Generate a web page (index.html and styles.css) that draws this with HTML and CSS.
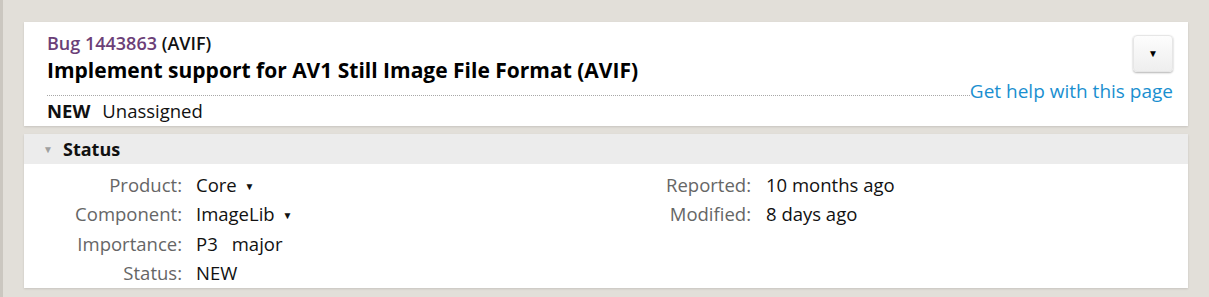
FILE: index.html
```html
<!DOCTYPE html>
<html lang="en">
<head>
<meta charset="utf-8">
<title>Bug 1443863</title>
<link rel="stylesheet" href="styles.css">
</head>
<body>
<div class="page">
  <section class="card summary">
    <div class="summary-head">
      <div class="titles">
        <div class="bug-line"><a class="bug-id" href="#">Bug 1443863</a> <span class="alias">(AVIF)</span></div>
        <h1 class="title">Implement support for AV1 Still Image File Format (AVIF)</h1>
      </div>
      <div class="actions">
        <button class="menu-btn" type="button"><span class="tri">&#9660;</span></button>
        <a class="help" href="#">Get help with this page</a>
      </div>
    </div>
    <div class="state-line"><span class="state">NEW</span><span class="assignee">Unassigned</span></div>
  </section>

  <section class="card module">
    <div class="module-head"><span class="twisty">&#9660;</span><span class="module-title">Status</span></div>
    <div class="module-body">
      <div class="fields fields-left">
        <div class="label">Product:</div><div class="value">Core <span class="drop">&#9660;</span></div>
        <div class="label">Component:</div><div class="value">ImageLib <span class="drop">&#9660;</span></div>
        <div class="label">Importance:</div><div class="value">P3<span class="sev">major</span></div>
        <div class="label">Status:</div><div class="value">NEW</div>
      </div>
      <div class="fields fields-right">
        <div class="label">Reported:</div><div class="value">10 months ago</div>
        <div class="label">Modified:</div><div class="value">8 days ago</div>
      </div>
    </div>
  </section>
</div>
</body>
</html>
```
FILE: styles.css
```css
html, body {
  margin: 0;
  padding: 0;
}
body {
  background: #e2dfd9;
  font-family: "Open Sans", "Noto Sans", sans-serif;
  color: #111;
  height: 297px;
  overflow: hidden;
}
.page {
  border-left: 3px solid #cbc7c0;
  min-height: 297px;
  padding: 22px 0 0 21px;
  box-sizing: border-box;
}
.card {
  background: #fff;
  width: 1164px;
  box-shadow: 0 1px 2px rgba(0, 0, 0, 0.12);
}
.summary {
  padding: 9px 15px 0 23px;
  box-sizing: border-box;
  height: 104px;
}
.summary-head {
  display: flex;
  align-items: flex-end;
}
.titles {
  flex: 1;
  border-bottom: 1px dotted #a8a8a8;
  padding-bottom: 10px;
}
.bug-line {
  font-size: 18px;
  line-height: 24px;
  font-weight: 600;
}
.bug-id {
  color: #6b3f78;
  text-decoration: none;
}
.alias {
  color: #111;
}
.title {
  margin: 0;
  font-size: 21px;
  line-height: 30px;
  font-weight: 700;
  color: #000;
}
.actions {
  display: flex;
  flex-direction: column;
  align-items: flex-end;
}
.menu-btn {
  width: 40px;
  height: 37px;
  margin-bottom: 8px;
  border: 1px solid #e6e6e6;
  border-radius: 4px;
  background: linear-gradient(#fdfdfd, #eeeeee);
  box-shadow: 0 1px 2px rgba(0, 0, 0, 0.3);
  padding: 0;
  display: flex;
  align-items: center;
  justify-content: center;
}
.tri {
  font-size: 10px;
  color: #000;
}
.help {
  color: #1a8fd0;
  text-decoration: none;
  font-size: 19px;
  line-height: 22px;
  margin-bottom: -6px;
}
.state-line {
  font-size: 18.5px;
  line-height: 30px;
}
.state {
  font-weight: 700;
  margin-right: 12px;
}
.module {
  margin-top: 8px;
  height: 154px;
}
.module-head {
  height: 30px;
  background: #ececec;
  display: flex;
  align-items: center;
  padding-left: 19px;
}
.twisty {
  font-size: 10px;
  color: #a0a0a0;
  width: 20px;
}
.module-title {
  font-weight: 700;
  font-size: 18px;
}
.module-body {
  display: grid;
  grid-template-columns: 582px 1fr;
  padding-top: 6px;
}
.fields {
  display: grid;
  align-content: start;
  grid-auto-rows: 29.3px;
  font-size: 18.5px;
  line-height: 29.3px;
}
.fields-left {
  grid-template-columns: 158px 1fr;
  column-gap: 14px;
}
.fields-right {
  grid-template-columns: 145px 1fr;
  column-gap: 15px;
}
.label {
  text-align: right;
  color: #666;
}
.value {
  color: #111;
}
.drop {
  font-size: 10px;
  line-height: 0;
  vertical-align: 2px;
  margin-left: 3px;
}
.sev {
  margin-left: 14px;
}
```
